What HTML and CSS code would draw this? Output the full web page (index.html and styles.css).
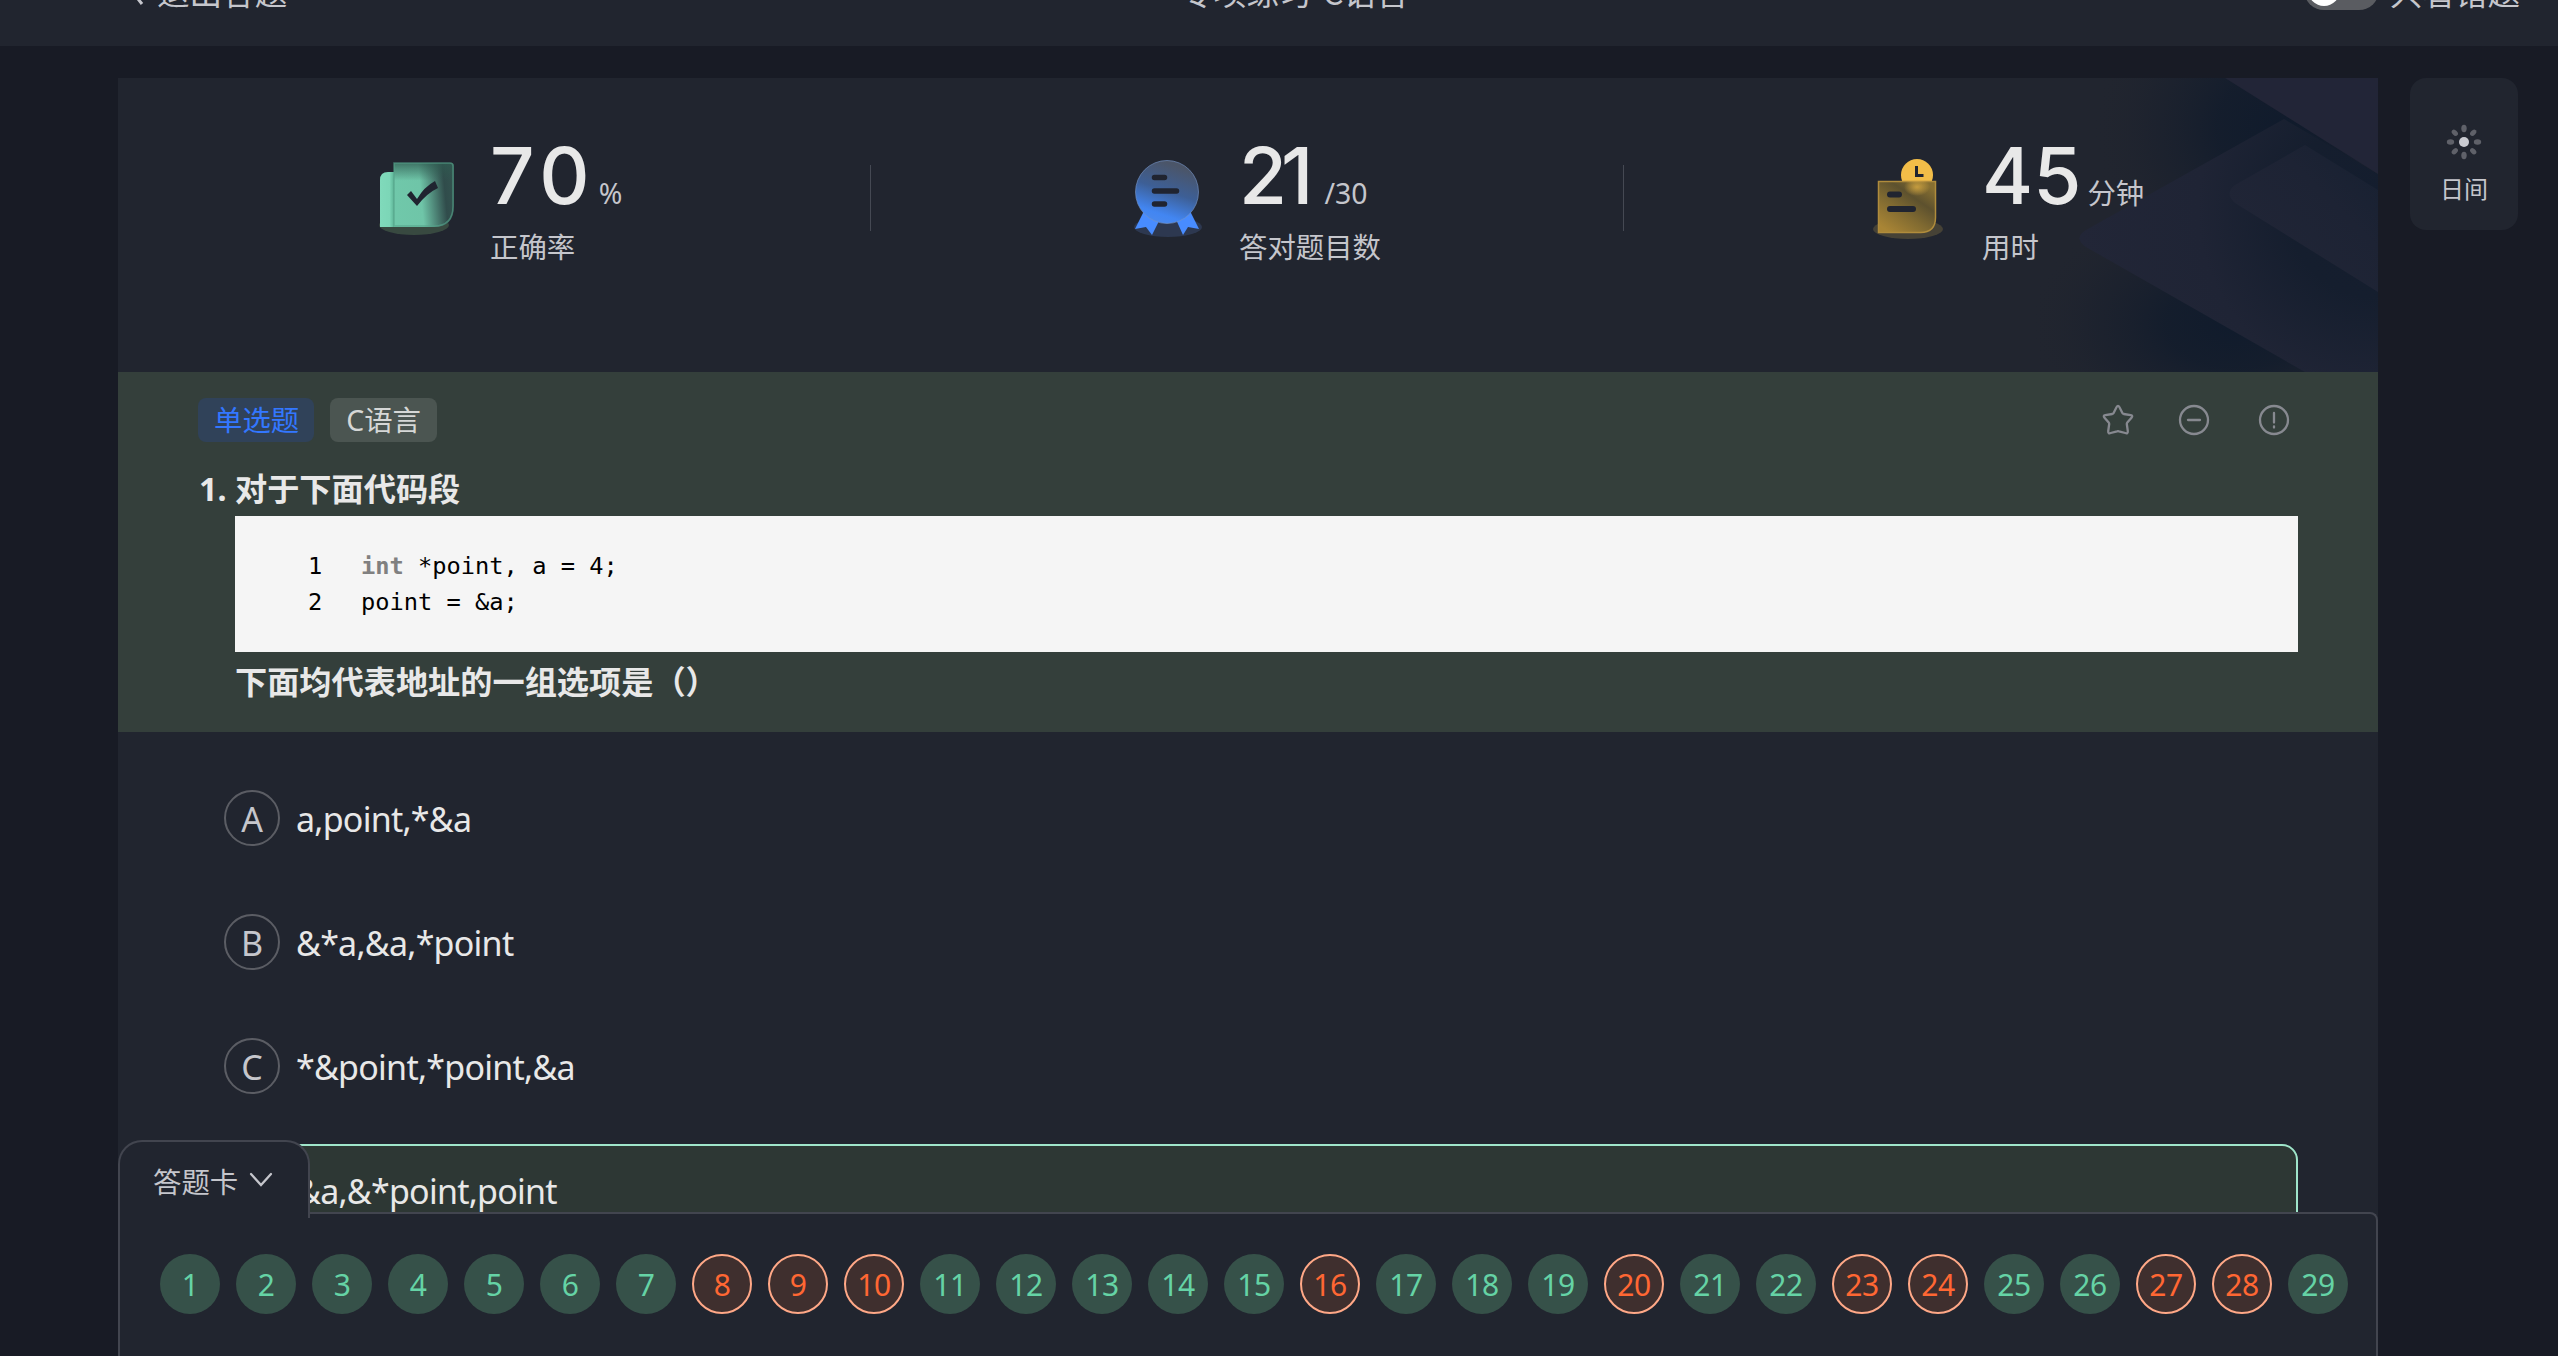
FILE: index.html
```html
<!DOCTYPE html>
<html lang="zh-CN">
<head>
  <meta charset="UTF-8">
  <title>专项练习-C语言</title>
  <link rel="stylesheet" href="styles.css">
</head>
<body>
  <header class="top-bar">
    <div class="back"><svg width="18" height="34" viewBox="0 0 18 34"><path d="M10 31L1 19.500 10 8" /></svg>退出答题</div>
    <div class="top-title">专项练习-C语言</div>
    <div class="only-wrong"><span class="switch"></span>只看错题</div>
  </header>

  <div class="page">
    <main class="main">
      <section class="stats">
        <!-- decoration in the corner -->
        <svg class="stats-bg" width="560" height="294" viewBox="0 0 560 294">
          <defs>
            <radialGradient id="glow"><stop offset="0" stop-color="#101b2c"/><stop offset="0.35" stop-color="#121c2c" stop-opacity="0.85"/><stop offset="0.7" stop-color="#181f2d" stop-opacity="0.4"/><stop offset="1" stop-color="#21252f" stop-opacity="0"/></radialGradient>
            <radialGradient id="plate" gradientUnits="userSpaceOnUse" cx="560" cy="130" r="300"><stop offset="0" stop-color="#141d2e"/><stop offset="0.3" stop-color="#151e2e"/><stop offset="0.6" stop-color="#1f2435"/><stop offset="1" stop-color="#222637"/></radialGradient>
            <linearGradient id="plate2" x1="1" y1="0" x2="0.3" y2="0.7"><stop offset="0" stop-color="#162031"/><stop offset="0.5" stop-color="#1d2334"/><stop offset="1" stop-color="#202536"/></linearGradient>
          </defs>
          <ellipse cx="465" cy="50" rx="190" ry="170" fill="url(#glow)"/>
          <ellipse cx="420" cy="245" rx="210" ry="130" fill="url(#glow)"/>
          <path d="M466 41L268 152q-13 8 0 17L487 294H560V96z" fill="url(#plate)"/>
          <path d="M487 67L417 107q-11 8 0 18L560 214V112z" fill="url(#plate2)"/>
          <path d="M407 0H560V96z" fill="#222537"/>
        </svg>
        <div class="stat">
          <svg class="stat-icon icon-book" width="76" height="80" viewBox="0 0 76 80">
            <defs>
              <linearGradient id="spine"><stop offset="0" stop-color="#80dabb"/><stop offset="0.6" stop-color="#7cd6b7"/><stop offset="1" stop-color="#4fa487"/></linearGradient>
              <linearGradient id="cover" x1="0" y1="0.55" x2="1" y2="0.45"><stop offset="0" stop-color="#70c8aa"/><stop offset="0.45" stop-color="#6fc5a8"/><stop offset="0.85" stop-color="#304c4b"/><stop offset="1" stop-color="#33524f"/></linearGradient>
              <linearGradient id="shade" x1="0" y1="0" x2="0" y2="1"><stop offset="0" stop-color="#2f5a50" stop-opacity="0.75"/><stop offset="0.28" stop-color="#2f5a50" stop-opacity="0"/></linearGradient>
            </defs>
            <ellipse cx="36" cy="64" rx="35" ry="10" fill="#384940"/>
            <path d="M2 66V19q0-8 8-8h8v55z" fill="url(#spine)"/>
            <path d="M16 2h57q3 0 3 3v40q0 21-20 21H16z" fill="url(#cover)"/>
            <path d="M16 2h56q3 0 3 3v40q0 20-19 20H16z" fill="url(#shade)" stroke="#55a188" stroke-opacity="0.65" stroke-width="1.5"/>
            <path d="M29 34l4-4 6 8q7-12 18-18l3 7Q49 32 39 45z" fill="#202430"/>
          </svg>
          <div>
            <div class="stat-num num-rate"><b>70</b><span>%</span></div>
            <div class="stat-label">正确率</div>
          </div>
        </div>
        <i class="divider"></i>
        <div class="stat">
          <svg class="stat-icon icon-medal" width="70" height="80" viewBox="0 0 70 80">
            <defs>
              <linearGradient id="medal" x1="0.7" y1="0.1" x2="0.4" y2="1"><stop offset="0" stop-color="#4b5568"/><stop offset="0.45" stop-color="#3d5f96"/><stop offset="0.85" stop-color="#4286f2"/><stop offset="1" stop-color="#4a89ee"/></linearGradient>
            </defs>
            <ellipse cx="35" cy="68" rx="34" ry="10" fill="#2d3850"/>
            <path d="M11 52L2 70l11-2 6 8 10-20zM57 52l9 18-11-2-5 8-9-20z" fill="#488cff"/>
            <circle cx="34" cy="33" r="31.5" fill="url(#medal)" stroke="#7392c4" stroke-opacity="0.65"/>
            <path d="M21.500 18.500h10M21.500 32h22M21.500 45h10" stroke="#202430" stroke-width="5.500" stroke-linecap="round"/>
          </svg>
          <div>
            <div class="stat-num num-right"><b>21</b><span>/30</span></div>
            <div class="stat-label">答对题目数</div>
          </div>
        </div>
        <i class="divider"></i>
        <div class="stat">
          <svg class="stat-icon icon-time" width="72" height="82" viewBox="0 0 72 82">
            <defs>
              <linearGradient id="note" x1="0.9" y1="0.1" x2="0.2" y2="1"><stop offset="0" stop-color="#876f31"/><stop offset="0.3" stop-color="#5d512e"/><stop offset="0.6" stop-color="#806a31"/><stop offset="1" stop-color="#a98535"/></linearGradient>
              <radialGradient id="spot"><stop offset="0" stop-color="#d9aa42" stop-opacity="0.8"/><stop offset="1" stop-color="#e8b746" stop-opacity="0"/></radialGradient>
            </defs>
            <ellipse cx="36" cy="71" rx="35" ry="10" fill="#464236"/>
            <circle cx="45" cy="17" r="16" fill="#f2bd48"/>
            <path d="M6.500 23.500h57v36q0 15-15 15h-42z" fill="url(#note)" stroke="#b08c3c" stroke-width="1.500"/>
            <ellipse cx="45" cy="29" rx="13" ry="9" fill="url(#spot)"/>
            <path d="M44.500 8v9.500h7" fill="none" stroke="#202430" stroke-width="3"/>
            <path d="M18 36.500h9M18 51h23" stroke="#202430" stroke-width="6" stroke-linecap="round"/>
          </svg>
          <div>
            <div class="stat-num"><b>45</b><span>分钟</span></div>
            <div class="stat-label">用时</div>
          </div>
        </div>
      </section>

      <section class="question">
        <div class="question-top">
          <span class="tag tag-blue">单选题</span>
          <span class="tag">C语言</span>
          <div class="actions">
            <svg width="32" height="32" viewBox="0 0 32 32"><path d="M14.500 3.200Q16 .6 17.500 3.200L20.400 9Q20.800 9.800 21.700 10L28.700 11.200Q31.300 11.700 29.500 13.800L25.300 18.500Q24.700 19.200 24.800 20L25.800 27Q26 30 23.300 29L17 27.300Q16 27 15 27.300L8.700 29Q6 30 6.200 27L7.200 20Q7.300 19.200 6.700 18.500L2.500 13.800Q.7 11.700 3.300 11.200L10.300 10Q11.200 9.800 11.600 9z"/></svg>
            <svg width="32" height="32" viewBox="0 0 32 32"><circle cx="16" cy="16" r="14"/><path d="M10 16h12"/></svg>
            <svg width="32" height="32" viewBox="0 0 32 32"><circle cx="16" cy="16" r="14"/><path d="M16 9v9.500M16 22.500v1"/></svg>
          </div>
        </div>
        <div class="question-body">
          <div class="question-no">1.</div>
          <div class="question-text">
            <p>对于下面代码段</p>
            <div class="code">
              <div class="code-line"><span>1</span><code><b>int</b> *point, a = 4;</code></div>
              <div class="code-line"><span>2</span><code>point = &amp;a;</code></div>
            </div>
            <p class="question-end">下面均代表地址的一组选项是（）</p>
          </div>
        </div>
      </section>

      <section class="options">
        <div class="option"><span class="letter">A</span><span class="option-text">a,point,*&amp;a</span></div>
        <div class="option"><span class="letter">B</span><span class="option-text">&amp;*a,&amp;a,*point</span></div>
        <div class="option"><span class="letter">C</span><span class="option-text">*&amp;point,*point,&amp;a</span></div>
        <div class="option option-right"><span class="letter">D</span><span class="option-text">&amp;a,&amp;*point,point</span></div>
      </section>
    </main>

    <aside class="day-btn">
      <svg width="36" height="36" viewBox="0 0 36 36">
        <circle cx="18" cy="18" r="5" fill="#c9cad1"/>
        <g fill="#5f6169">
          <ellipse cx="18" cy="4.500" rx="2.700" ry="3.700"/><ellipse cx="18" cy="31.500" rx="2.700" ry="3.700"/>
          <ellipse cx="4.500" cy="18" rx="3.700" ry="2.700"/><ellipse cx="31.500" cy="18" rx="3.700" ry="2.700"/>
          <ellipse cx="8.800" cy="8.800" rx="2.500" ry="3.600" transform="rotate(-45 8.800 8.800)"/><ellipse cx="27.200" cy="27.200" rx="2.500" ry="3.600" transform="rotate(-45 27.200 27.200)"/>
          <ellipse cx="27.200" cy="8.800" rx="2.500" ry="3.600" transform="rotate(45 27.200 8.800)"/><ellipse cx="8.800" cy="27.200" rx="2.500" ry="3.600" transform="rotate(45 8.800 27.200)"/>
        </g>
      </svg>
      日间
    </aside>
  </div>

  <footer class="answer-card">
    <div class="card-tab">答题卡<svg width="24" height="16" viewBox="0 0 24 16"><path d="M2 2l10 11L22 2"/></svg></div>
    <div class="card-list" id="cardList"></div>
  </footer>

  <script>
    const wrong = [8, 9, 10, 16, 20, 23, 24, 27, 28];
    const list = document.getElementById('cardList');
    for (let i = 1; i <= 29; i++) {
      const item = document.createElement('span');
      item.className = wrong.includes(i) ? 'num num-wrong' : 'num';
      item.textContent = i;
      list.appendChild(item);
    }
  </script>
</body>
</html>
```
FILE: styles.css
```css
* {
  box-sizing: border-box;
}
body {
  margin: 0;
  height: 1356px;
  overflow: hidden;
  background-color: #181b25;
  color: #e8e8e8;
  font-family: "Noto Sans", "Noto Sans CJK SC", sans-serif;
}
p {
  margin: 0;
}
svg {
  flex: none;
  display: block;
}

/* top bar, scrolled partly out of view */
.top-bar {
  display: grid;
  grid-template-columns: 1fr auto 1fr;
  align-items: center;
  height: 120px;
  margin-top: -74px;
  padding: 8px 38px 0 70px;
  background-color: #21252f;
  color: #c5c6cc;
  font-family: "Noto Sans CJK SC", sans-serif;
  font-size: 32.6px;
}
.back,
.only-wrong {
  display: flex;
  align-items: center;
}
.back {
  padding-left: 62px;
}
.back svg {
  margin-right: 7px;
  fill: none;
  stroke: #c5c6cc;
  stroke-width: 3;
}
.only-wrong {
  justify-content: flex-end;
}
.switch {
  width: 75px;
  height: 40px;
  margin-right: 11px;
  padding: 4px;
  border-radius: 20px;
  background-color: #5a5c61;
}
.switch::before {
  content: "";
  display: block;
  width: 32px;
  height: 32px;
  border-radius: 50%;
  background-color: #fff;
}

.page {
  display: flex;
  align-items: flex-start;
  gap: 32px;
  padding: 32px 40px 0 118px;
}
.main {
  width: 2260px;
  height: 1300px;
  background-color: #21252f;
}

/* score */
.stats {
  position: relative;
  display: flex;
  height: 294px;
  padding-top: 57px;
}
.stats-bg {
  position: absolute;
  top: 0;
  right: 0;
}
.stat {
  position: relative;
  display: flex;
  width: 752px;
}
.icon-book {
  margin: 26px 36px 0 260px;
}
.icon-medal {
  margin: 24px 36px 0 262px;
}
.icon-time {
  margin: 23px 38px 0 248px;
}
.stat-num {
  display: flex;
  align-items: baseline;
  height: 92px;
  line-height: 82px;
}
.stat-num b {
  margin-right: 6px;
  font-family: Inter, sans-serif;
  font-size: 78px;
  font-weight: 500;
}
.num-rate b {
  margin-right: 3px;
  letter-spacing: 6px;
}
.num-right b {
  margin-right: 17px;
  letter-spacing: -6px;
}
.stat-num span,
.stat-label {
  color: #c5c6cc;
  font-size: 28.4px;
}
.stat-label {
  line-height: 40px;
}
.divider {
  width: 1px;
  height: 66px;
  margin-top: 30px;
  background-color: #454953;
}

/* question */
.question {
  height: 360px;
  padding: 26px 80px 0;
  background-color: #343f3b;
}
.question-top {
  display: flex;
  gap: 16px;
}
.tag {
  height: 44px;
  padding: 0 16px;
  border-radius: 8px;
  background-color: #4b5551;
  color: #d5d7d6;
  font-size: 28.4px;
  line-height: 44px;
}
.tag-blue {
  padding: 0 15px 0 16px;
  background-color: #304259;
  color: #3377ff;
}
.actions {
  display: flex;
  gap: 44px;
  margin-left: auto;
  padding: 6px 8px 0 0;
}
.actions svg {
  fill: none;
  stroke: #878990;
  stroke-width: 2.3;
  stroke-linecap: round;
}
.actions svg:last-child {
  margin-left: 4px;
}
.question-body {
  display: flex;
  margin-top: 25px;
  font-size: 32.2px;
  font-weight: bold;
  line-height: 44px;
}
.question-no {
  width: 37px;
  padding-left: 1px;
}
.question-text {
  width: 2063px;
}
.code {
  height: 136px;
  margin-top: 5px;
  padding: 32px 0 0 73px;
  background-color: #f5f5f5;
  color: #000;
  font-family: "DejaVu Sans Mono", monospace;
  font-size: 23.7px;
  font-weight: normal;
  line-height: 36px;
}
.code-line {
  display: flex;
}
.code-line span {
  width: 53px;
}
.code-line code {
  font-family: inherit;
}
.code-line b {
  color: #808080;
}
.question-end {
  margin-top: 8px;
}

/* options */
.options {
  display: flex;
  flex-direction: column;
  gap: 32px;
  padding: 40px 80px 0;
}
.option {
  display: flex;
  align-items: center;
  height: 92px;
  padding-left: 24px;
  border: 2px solid transparent;
  border-radius: 16px;
}
.option-right {
  border-color: #9fe5ca;
  background-color: #2d3734;
}
.letter {
  width: 56px;
  height: 56px;
  margin-right: 16px;
  border: 2px solid #5b5d64;
  border-radius: 50%;
  color: #c5c6cc;
  font-size: 34px;
  line-height: 54px;
  text-align: center;
}
.option-text {
  padding-top: 2px;
  font-size: 34px;
  letter-spacing: -0.75px;
}

.day-btn {
  display: flex;
  flex-direction: column;
  align-items: center;
  width: 108px;
  height: 152px;
  padding-top: 46px;
  border-radius: 16px;
  background-color: #21252f;
  color: #c5c6cc;
  font-size: 24px;
  line-height: 57px;
}

/* answer card fixed to the bottom */
.answer-card {
  position: fixed;
  left: 118px;
  bottom: 0;
  width: 2260px;
  height: 144px;
  border: 2px solid #42454f;
  border-bottom: none;
  border-radius: 0 8px 0 0;
  background-color: #21252f;
}
.card-tab {
  position: absolute;
  left: -2px;
  bottom: 138px;
  display: flex;
  align-items: center;
  gap: 11px;
  width: 192px;
  height: 78px;
  padding: 0 0 0 33px;
  border: 2px solid #42454f;
  border-bottom: none;
  border-radius: 24px 24px 0 0;
  background-color: #21252f;
  color: #c5c6cc;
  font-size: 28.4px;
}
.card-tab svg {
  fill: none;
  stroke: #c5c6cc;
  stroke-width: 2.3;
  stroke-linecap: round;
}
.card-list {
  display: flex;
  gap: 16px;
  padding: 40px;
}
.num {
  flex: none;
  width: 60px;
  height: 60px;
  border-radius: 50%;
  background-color: #365149;
  color: #65d3a5;
  font-size: 30px;
  letter-spacing: -0.5px;
  line-height: 61px;
  text-align: center;
}
.num-wrong {
  border: 2px solid #ffa887;
  background-color: #3f2f2e;
  color: #ff6733;
  line-height: 57px;
}
```
